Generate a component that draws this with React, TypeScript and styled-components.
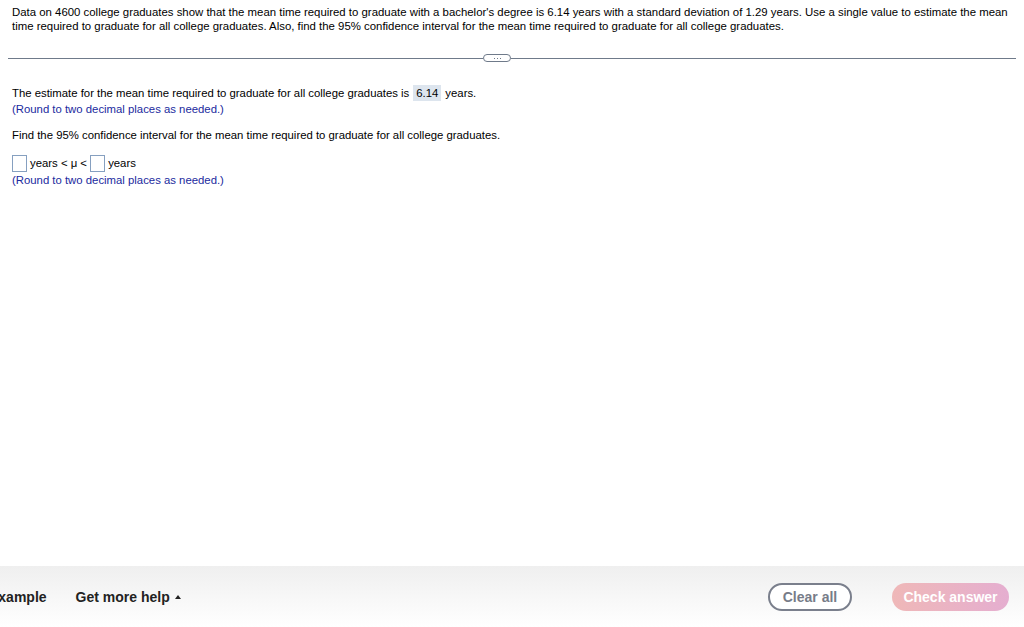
import React from "react";
import styled, { createGlobalStyle } from "styled-components";

const GlobalStyle = createGlobalStyle`
  html, body {
    margin: 0;
    padding: 0;
    background: #fff;
    font-family: "Liberation Sans", Arial, sans-serif;
    color: #000;
  }
`;

const Page = styled.div`
  display: flex;
  flex-direction: column;
  width: 1024px;
  height: 627px;
  overflow: hidden;
`;

const Question = styled.div`
  padding: 5px 12px 0 12px;
  font-size: 11.4px;
  line-height: 14px;
  height: 48px;
`;

const Divider = styled.div`
  display: flex;
  align-items: center;
  margin: 0 8px;
  height: 10px;
`;

const Rule = styled.div<{ $grow: number }>`
  flex: ${(p) => p.$grow};
  height: 1px;
  background: #6f7a8a;
`;

const MoreButton = styled.div`
  width: 26px;
  height: 6px;
  border: 1px solid #6f7a8a;
  border-radius: 4px;
  background: #fff;
  display: flex;
  align-items: center;
  justify-content: center;
  gap: 2px;
`;

const Dot = styled.span`
  width: 1px;
  height: 1px;
  background: #6f7a8a;
`;

const Answer = styled.div`
  flex: 1;
  padding: 22px 12px 0 12px;
  font-size: 11.35px;
  line-height: 16px;
`;

const Line = styled.div<{ $mt?: number }>`
  margin-top: ${(p) => p.$mt ?? 0}px;
`;

const InputRow = styled.div`
  margin-top: 11px;
  display: flex;
  align-items: center;
  height: 18px;
`;

const Hint = styled.div`
  color: #1a2a9e;
`;

const Filled = styled.span`
  background: #dde5ee;
  padding: 2px 3px;
  margin: 0 4px;
`;

const Box = styled.span`
  display: inline-block;
  width: 15px;
  height: 17px;
  border: 1px solid #86a0c0;
  margin: 0 3px 0 0;
  box-sizing: border-box;
`;

const Footer = styled.div`
  height: 61px;
  flex-shrink: 0;
  background: linear-gradient(#efefef, #ffffff);
  display: flex;
  align-items: center;
`;

const FooterLink = styled.span<{ $ml: number }>`
  margin-left: ${(p) => p.$ml}px;
  font-size: 14px;
  font-weight: bold;
  color: #222;
  display: flex;
  align-items: center;
  gap: 5px;
`;

const Caret = styled.span`
  width: 0;
  height: 0;
  border-left: 3px solid transparent;
  border-right: 3px solid transparent;
  border-bottom: 4px solid #222;
`;

const Spacer = styled.div`
  flex: 1;
`;

const ClearButton = styled.button`
  width: 84px;
  height: 28px;
  border: 2px solid #7a7f8c;
  border-radius: 14px;
  background: #fff;
  color: #777c88;
  font-family: inherit;
  font-size: 14px;
  font-weight: bold;
  padding: 0;
`;

const CheckButton = styled.button`
  width: 117px;
  height: 28px;
  border: none;
  border-radius: 14px;
  margin: 0 15px 0 40px;
  background: linear-gradient(90deg, #efb8b8, #e5aed0);
  color: #fff;
  font-family: inherit;
  font-size: 14px;
  font-weight: bold;
  padding: 0;
`;

export default function App() {
  return (
    <Page>
      <GlobalStyle />
      <Question>
        Data on 4600 college graduates show that the mean time required to graduate with a bachelor's
        degree is 6.14 years with a standard deviation of 1.29 years. Use a single value to estimate the
        mean time required to graduate for all college graduates. Also, find the 95% confidence interval
        for the mean time required to graduate for all college graduates.
      </Question>
      <Divider>
        <Rule $grow={475} />
        <MoreButton>
          <Dot />
          <Dot />
          <Dot />
        </MoreButton>
        <Rule $grow={505} />
      </Divider>
      <Answer>
        <Line>
          The estimate for the mean time required to graduate for all college graduates is
          <Filled>6.14</Filled>years.
        </Line>
        <Hint>(Round to two decimal places as needed.)</Hint>
        <Line $mt={10}>
          Find the 95% confidence interval for the mean time required to graduate for all college
          graduates.
        </Line>
        <InputRow>
          <Box />
          years &lt; μ &lt;&nbsp;
          <Box />
          years
        </InputRow>
        <Hint>(Round to two decimal places as needed.)</Hint>
      </Answer>
      <Footer>
        <FooterLink $ml={-11}>Example</FooterLink>
        <FooterLink $ml={29}>
          Get more help <Caret />
        </FooterLink>
        <Spacer />
        <ClearButton>Clear all</ClearButton>
        <CheckButton>Check answer</CheckButton>
      </Footer>
    </Page>
  );
}
